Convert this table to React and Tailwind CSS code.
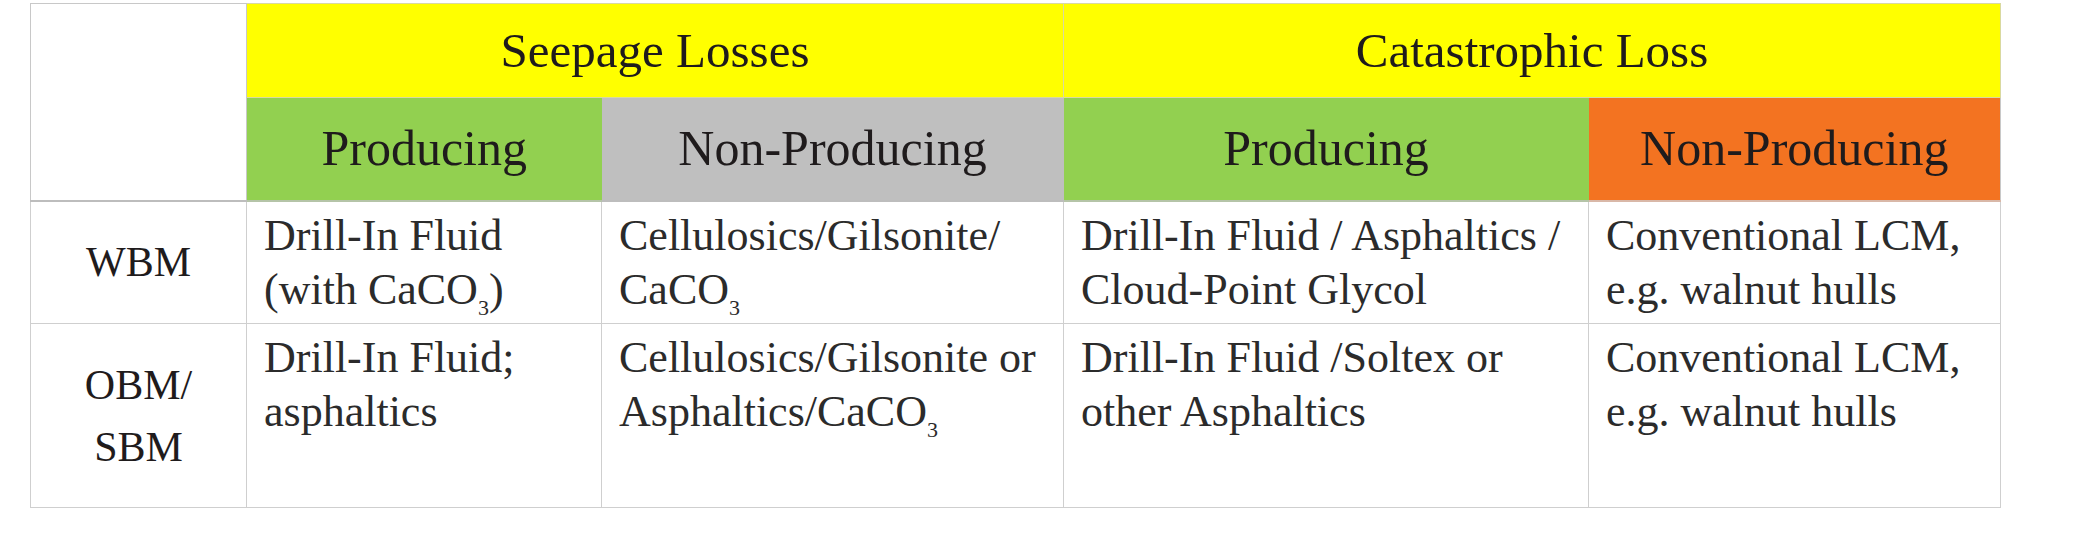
const rows = [
  {
    label: ["WBM"],
    height: "h-[123px]",
    labelLeading: "leading-[54px]",
    cells: [
      ["Drill-In Fluid", ["(with CaCO", "3", ")"]],
      ["Cellulosics/Gilsonite/", ["CaCO", "3", ""]],
      ["Drill-In Fluid / Asphaltics /", "Cloud-Point Glycol"],
      ["Conventional LCM,", "e.g. walnut hulls"],
    ],
  },
  {
    label: ["OBM/", "SBM"],
    height: "h-[184px]",
    labelLeading: "leading-[62px]",
    cells: [
      ["Drill-In Fluid;", "asphaltics"],
      ["Cellulosics/Gilsonite or", ["Asphaltics/CaCO", "3", ""]],
      ["Drill-In Fluid /Soltex or", "other Asphaltics"],
      ["Conventional LCM,", "e.g. walnut hulls"],
    ],
  },
];

function Line({ value }) {
  if (Array.isArray(value)) {
    const [before, sub, after] = value;
    return (
      <span>
        {before}
        <sub className="text-[22px] relative top-[11px] align-baseline">{sub}</sub>
        {after}
      </span>
    );
  }
  return <span>{value}</span>;
}

export default function App() {
  return (
    <div
      className="w-[2079px] h-[534px] bg-white pl-[30px] pt-[3px] text-[#1f1b1c]"
      style={{ fontFamily: '"Liberation Serif", serif' }}
    >
      <table className="table-fixed border-collapse w-[1970px] border border-[#c8c8c8]">
        <colgroup>
          <col className="w-[216px]" />
          <col className="w-[355px]" />
          <col className="w-[462px]" />
          <col className="w-[525px]" />
          <col className="w-[412px]" />
        </colgroup>
        <thead>
          <tr className="h-[94px]">
            <th rowSpan={2} className="bg-white border border-[#c8c8c8] border-b-2 border-b-[#bdbdbd]" />
            <th colSpan={2} className="bg-[#ffff00] border border-[#d9d9a0] text-[49px] font-normal">
              Seepage Losses
            </th>
            <th colSpan={2} className="bg-[#ffff00] border border-[#d9d9a0] text-[49px] font-normal">
              Catastrophic Loss
            </th>
          </tr>
          <tr className="h-[103px] text-[50px]">
            <th className="bg-[#92d050] font-normal border-b-2 border-b-[#b5c4a8]">Producing</th>
            <th className="bg-[#bfbfbf] font-normal border-b-2 border-b-[#bdbdbd]">Non-Producing</th>
            <th className="bg-[#92d050] font-normal border-b-2 border-b-[#b5c4a8]">Producing</th>
            <th className="bg-[#f37321] font-normal border-b-2 border-b-[#d9b8a8]">Non-Producing</th>
          </tr>
        </thead>
        <tbody>
          {rows.map((row, i) => (
            <tr key={i} className={row.height}>
              <td className={`border border-[#cfcfcf] text-center align-middle text-[42px] ${row.labelLeading}`}>
                {row.label.map((l) => (
                  <div key={l}>{l}</div>
                ))}
              </td>
              {row.cells.map((cell, j) => (
                <td
                  key={j}
                  className="border border-[#cfcfcf] align-top px-[17px] pt-[7px] text-[44px] leading-[54px] whitespace-nowrap text-[#2b2b2b]"
                >
                  {cell.map((line, k) => (
                    <div key={k}>
                      <Line value={line} />
                    </div>
                  ))}
                </td>
              ))}
            </tr>
          ))}
        </tbody>
      </table>
    </div>
  );
}
